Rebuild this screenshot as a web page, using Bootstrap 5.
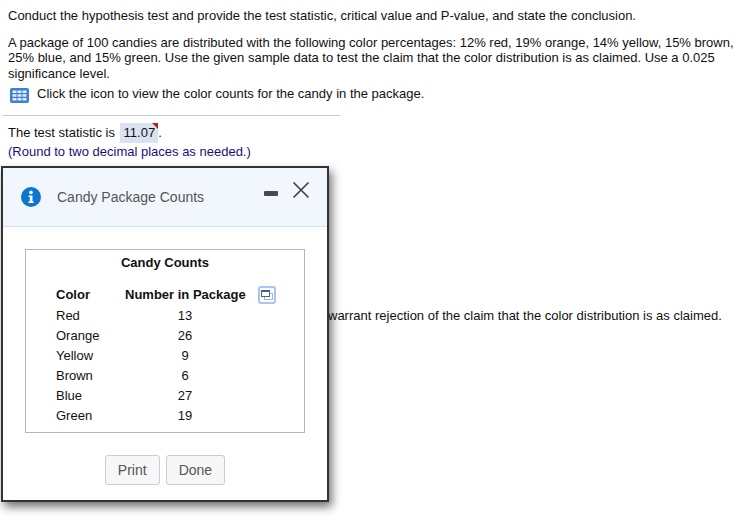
<!DOCTYPE html>
<html lang="en">
<head>
    <meta charset="UTF-8">
    <meta name="viewport" content="width=device-width, initial-scale=1.0">
    <title>Candy Package Counts</title>
    <link href="https://cdn.jsdelivr.net/npm/bootstrap@5.3.0/dist/css/bootstrap.min.css" rel="stylesheet">
    <style>
        body {
            font-family: "Liberation Sans", Arial, sans-serif;
            font-size: 13px;
            line-height: 15.5px;
            color: #111;
            background: #fff;
            overflow: hidden;
        }
        .page-wrap { padding: 8px 8px 0 8px; height: 520px; position: relative; }
        .q-lead { margin: 0 0 11px 0; }
        .q-body { margin: 0 0 4px 0; }
        .hint-row { height: 20px; }
        .hint-row svg { margin-left: 2px; margin-right: 8px; margin-top: 3px; }
        .hint-row span { margin-top: 1px; }
        .q-rule { height: 1px; background: #c9c9d0; margin: 10px 0 7px -6px; width: 338px; }
        .answer-box {
            position: relative;
            display: inline-block;
            background: #d8e2f1;
            padding: 2px 3px 2px 4px;
            margin: 0 0 0 1px;
        }
        .answer-flag {
            position: absolute;
            top: 0;
            right: 0;
            border-top: 6px solid #b5202c;
            border-left: 6px solid transparent;
        }
        .round-note { color: #1a0f7a; margin-top: 1px; }
        .tail-line { margin: 149px 0 0 320px; white-space: nowrap; }
        .dlg {
            position: absolute;
            left: 1px;
            top: 166px;
            width: 328px;
            height: 336px;
            border: 2px solid #333;
            background: #fff;
            box-shadow: 3px 5px 9px rgba(0,0,0,.55);
        }
        .dlg-head {
            height: 59px;
            background: #f2f7fe;
            border-bottom: 1px solid #cfe4fb;
            padding-left: 18px;
            color: #555;
            font-size: 14px;
        }
        .dlg-title { margin-left: 16px; margin-top: 1px; }
        .dlg-min { position: absolute; left: 261px; top: 23px; width: 14px; height: 5px; background: #4a4a4a; border-radius: 1px; }
        .dlg-close { position: absolute; left: 289px; top: 13px; }
        .count-box {
            margin: 22px 0 0 22px;
            width: 280px;
            height: 184px;
            border: 1px solid #b5b5b5;
            padding-top: 5px;
        }
        .count-title { font-weight: 700; text-align: center; margin-bottom: 14px; line-height: 15px; }
        .count-grid { margin-left: 30px; width: 224px; }
        .count-row { height: 20px; line-height: 20px; }
        .count-head { height: 22px; font-weight: 700; }
        .c-color { width: 69px; }
        .c-num { width: 120px; text-align: center; white-space: nowrap; }
        .copy-btn { margin-left: 13px; width: 18px; height: 18px; border: 2px solid #a8c4f8; border-radius: 3px; background: #fff; }
        .dlg-foot { margin-top: 22px; gap: 6px; }
        .dlg-btn {
            height: 30px;
            padding: 0 12px;
            font-size: 14px;
            line-height: 28px;
            color: #555;
            background: #f7f7f7;
            border: 1px solid #ccc;
            border-radius: 3px;
        }
    </style>
</head>
<body>
    <div class="page-wrap">
        <p class="q-lead">Conduct the hypothesis test and provide the test statistic, critical value and P-value, and state the conclusion.</p>
        <p class="q-body">A package of 100 candies are distributed with the following color percentages: 12% red, 19% orange, 14% yellow, 15% brown, 25% blue, and 15% green. Use the given sample data to test the claim that the color distribution is as claimed. Use a 0.025 significance level.</p>
        <div class="hint-row d-flex align-items-start">
            <svg width="19" height="15" viewBox="0 0 19 15">
                <rect width="19" height="15" rx="2" fill="#3a7fd8"/>
                <path d="M2.5 2.5h4v2.6h-4zM7.5 2.5h4v2.6h-4zM12.5 2.5h4v2.6h-4zM2.5 6.2h4v2.6h-4zM7.5 6.2h4v2.6h-4zM12.5 6.2h4v2.6h-4zM2.5 9.9h4v2.6h-4zM7.5 9.9h4v2.6h-4zM12.5 9.9h4v2.6h-4z" fill="#e4effc"/>
            </svg>
            <span>Click the icon to view the color counts for the candy in the package.</span>
        </div>
        <div class="q-rule"></div>
        <div>The test statistic is <span class="answer-box">11.07<span class="answer-flag"></span></span>.</div>
        <div class="round-note">(Round to two decimal places as needed.)</div>
        <div class="tail-line">warrant rejection of the claim that the color distribution is as claimed.</div>

        <div class="dlg">
            <div class="dlg-head d-flex align-items-center">
                <svg width="20" height="20" viewBox="0 0 20 20">
                    <circle cx="10" cy="10" r="10" fill="#0b76cc"/>
                    <circle cx="10" cy="5.4" r="1.8" fill="#fff"/>
                    <path d="M7.6 8.4h3.9v6.2h1.3v1.5H7.4v-1.5h1.4V9.9H7.6z" fill="#fff"/>
                </svg>
                <span class="dlg-title">Candy Package Counts</span>
            </div>
            <div class="dlg-min"></div>
            <svg class="dlg-close" width="18" height="18" viewBox="0 0 18 18">
                <path d="M1.5 1.5l15 15M16.5 1.5l-15 15" stroke="#444" stroke-width="1.7" fill="none"/>
            </svg>
            <div class="count-box">
                <div class="count-title">Candy Counts</div>
                <div class="count-grid">
                    <div class="count-row count-head d-flex align-items-center">
                        <div class="c-color">Color</div>
                        <div class="c-num">Number in Package</div>
                        <div class="copy-btn d-flex align-items-center justify-content-center">
                            <svg width="12" height="10" viewBox="0 0 12 10">
                                <rect x="3.5" y="3.5" width="8" height="6" fill="#fff" stroke="#a9b4d8"/>
                                <rect x=".5" y=".5" width="8" height="6" fill="#fff" stroke="#4c5a9c"/>
                                <path d="M.5 1.5h8" stroke="#4c5a9c"/>
                            </svg>
                        </div>
                    </div>
                    <div class="count-row d-flex"><div class="c-color">Red</div><div class="c-num">13</div></div>
                    <div class="count-row d-flex"><div class="c-color">Orange</div><div class="c-num">26</div></div>
                    <div class="count-row d-flex"><div class="c-color">Yellow</div><div class="c-num">9</div></div>
                    <div class="count-row d-flex"><div class="c-color">Brown</div><div class="c-num">6</div></div>
                    <div class="count-row d-flex"><div class="c-color">Blue</div><div class="c-num">27</div></div>
                    <div class="count-row d-flex"><div class="c-color">Green</div><div class="c-num">19</div></div>
                </div>
            </div>
            <div class="dlg-foot d-flex justify-content-center">
                <button type="button" class="btn dlg-btn">Print</button>
                <button type="button" class="btn dlg-btn">Done</button>
            </div>
        </div>
    </div>

    <script src="https://cdn.jsdelivr.net/npm/bootstrap@5.3.0/dist/js/bootstrap.bundle.min.js"></script>
</body>
</html>
